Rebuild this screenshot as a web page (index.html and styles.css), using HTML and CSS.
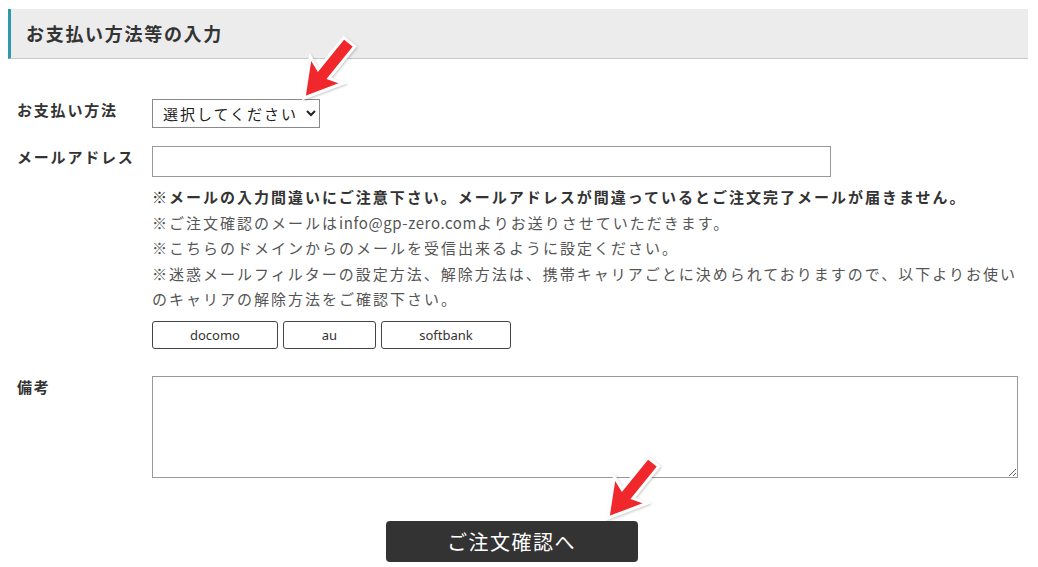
FILE: index.html
```html
<!DOCTYPE html>
<html lang="ja">
<head>
  <meta charset="UTF-8">
  <title>お支払い方法等の入力</title>
  <link rel="stylesheet" href="styles.css">
</head>
<body>
  <div class="page">
    <h2 class="section-title">お支払い方法等の入力</h2>

    <form class="order-form">
      <div class="form-row row-payment">
        <label class="form-label" for="payment">お支払い方法</label>
        <div class="form-field">
          <select id="payment" class="payment-select">
            <option>選択してください</option>
          </select>
        </div>
      </div>

      <div class="form-row row-mail">
        <label class="form-label" for="mail">メールアドレス</label>
        <div class="form-field">
          <input type="text" id="mail" class="mail-input">
          <div class="notes">
            <p class="note-strong">※メールの入力間違いにご注意下さい。メールアドレスが間違っているとご注文完了メールが届きません。</p>
            <p>※ご注文確認のメールは<span class="addr">info@gp-zero.com</span>よりお送りさせていただきます。</p>
            <p>※こちらのドメインからのメールを受信出来るように設定ください。</p>
            <p>※迷惑メールフィルターの設定方法、解除方法は、携帯キャリアごとに決められておりますので、以下よりお使いのキャリアの解除方法をご確認下さい。</p>
          </div>
          <div class="carrier-links">
            <a class="carrier-btn btn-docomo" href="#">docomo</a>
            <a class="carrier-btn btn-au" href="#">au</a>
            <a class="carrier-btn btn-softbank" href="#">softbank</a>
          </div>
        </div>
      </div>

      <div class="form-row row-memo">
        <label class="form-label" for="memo">備考</label>
        <div class="form-field">
          <textarea id="memo" class="memo"></textarea>
        </div>
      </div>

      <div class="submit-area">
        <button type="submit" class="submit-btn">ご注文確認へ</button>
      </div>
    </form>

    <!-- annotation arrows -->
    <svg class="pointer pointer-select" width="80" height="80" viewBox="0 0 80 80">
      <polygon transform="translate(12,68) rotate(129)" points="0,0 -36,-21 -31,-7 -72,-7 -72,7 -31,7 -36,21" />
    </svg>
    <svg class="pointer pointer-submit" width="80" height="80" viewBox="0 0 80 80">
      <polygon transform="translate(12,68) rotate(129)" points="0,0 -36,-21 -31,-7 -72,-7 -72,7 -31,7 -36,21" />
    </svg>
  </div>
</body>
</html>
```

FILE: styles.css
```css
body {
  margin: 0;
  background: #fff;
  color: #333;
  font-family: "Noto Sans CJK JP", "Noto Sans", sans-serif;
}
.page {
  position: relative;
  padding: 9px 10px 0 8px;
}
.section-title {
  margin: 0;
  height: 49px;
  line-height: 49px;
  padding-left: 15px;
  background: #ececec;
  border-left: 3px solid #2b9bab;
  border-bottom: 1px solid #c8c8c8;
  font-size: 18px;
  letter-spacing: 1.7px;
  font-weight: bold;
  color: #333;
}
.order-form {
  margin-top: 40px;
}
.form-row {
  display: grid;
  grid-template-columns: 144px 1fr;
  align-items: start;
}
.row-mail {
  margin-top: 18px;
}
.row-memo {
  margin-top: 27px;
}
.form-label {
  padding-left: 9px;
  font-size: 15px;
  line-height: 22px;
  font-weight: bold;
  letter-spacing: 1.8px;
  color: #333;
}
.payment-select {
  height: 29px;
  width: 168px;
  padding: 0 4px 0 6px;
  border: 1px solid #8a8a8a;
  border-radius: 0;
  background: #fff;
  font-family: inherit;
  font-size: 15px;
  letter-spacing: 2px;
  color: #222;
}
.mail-input {
  display: block;
  box-sizing: border-box;
  width: 679px;
  height: 31px;
  border: 1px solid #999;
  margin: 0;
}
.notes {
  margin-top: 7px;
  font-size: 15px;
  line-height: 25.6px;
  letter-spacing: 2px;
  color: #555;
  padding-right: 10px;
}
.notes p {
  margin: 0;
}
.notes .note-strong {
  font-weight: bold;
  letter-spacing: 2px;
  color: #333;
}
.notes .addr {
  letter-spacing: 0.6px;
}
.carrier-links {
  display: flex;
  gap: 5px;
  margin-top: 9px;
}
.carrier-btn {
  display: block;
  box-sizing: border-box;
  height: 28px;
  line-height: 26px;
  border: 1px solid #444;
  border-radius: 3px;
  text-align: center;
  font-size: 13px;
  color: #333;
  text-decoration: none;
  font-family: "Noto Sans", sans-serif;
}
.btn-docomo {
  width: 126px;
}
.btn-au {
  width: 93px;
}
.btn-softbank {
  width: 130px;
}
.memo {
  display: block;
  box-sizing: border-box;
  width: 866px;
  height: 102px;
  border: 1px solid #999;
  margin: 0;
}
.submit-area {
  display: flex;
  justify-content: center;
  margin-top: 43px;
  padding-right: 13px;
}
.submit-btn {
  width: 252px;
  height: 41px;
  border: none;
  border-radius: 4px;
  background: #333;
  color: #fff;
  font-family: inherit;
  font-size: 20px;
  letter-spacing: 1.5px;
}
.pointer {
  position: absolute;
  overflow: visible;
  filter: drop-shadow(1px 1px 1px rgba(0, 0, 0, 0.2));
}
.pointer polygon {
  fill: #f0282b;
  stroke: #fff;
  stroke-width: 3;
  stroke-linejoin: miter;
}
.pointer-select {
  left: 292px;
  top: 30px;
}
.pointer-submit {
  left: 596px;
  top: 450px;
}
```
